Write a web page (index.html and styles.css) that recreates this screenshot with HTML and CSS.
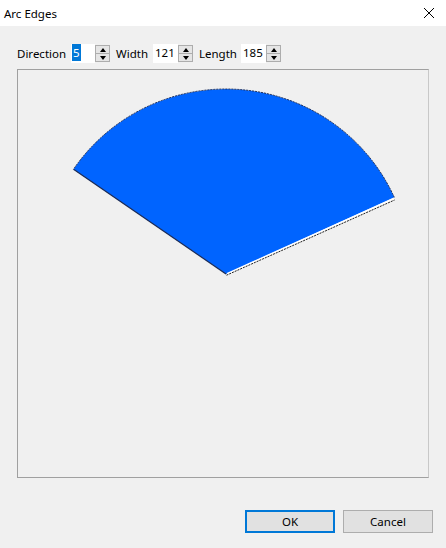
FILE: index.html
```html
<!DOCTYPE html>
<html lang="en">

<head>
    <meta charset="UTF-8">
    <meta name="viewport" content="width=device-width, initial-scale=1.0">
    <title>Arc Edges</title>
    <link rel="stylesheet" href="styles.css">
</head>

<body>
    <div class="window">
        <div class="titlebar">
            <span class="title">Arc Edges</span>
            <svg class="close" width="12" height="12" viewBox="0 0 12 12">
                <path d="M1 1 L11 11 M11 1 L1 11" stroke="#000" stroke-width="1" fill="none"/>
            </svg>
        </div>

        <div class="controls">
            <span class="label l-dir">Direction</span>
            <div class="field f-dir"><span class="sel">5</span></div>
            <div class="spin">
                <div class="half"><span class="up"></span></div>
                <div class="half"><span class="down"></span></div>
            </div>
            <span class="label l-width">Width</span>
            <div class="field f-width">121</div>
            <div class="spin">
                <div class="half"><span class="up"></span></div>
                <div class="half"><span class="down"></span></div>
            </div>
            <span class="label l-len">Length</span>
            <div class="field f-len">185</div>
            <div class="spin">
                <div class="half"><span class="up"></span></div>
                <div class="half"><span class="down"></span></div>
            </div>
        </div>

        <div class="canvas">
            <!-- viewBox in window coordinates so the numbers read like the screen -->
            <svg width="410" height="407" viewBox="18 70 410 407">
                <path d="M226 274 L394.3 197.3 A185 185 0 0 0 73.5 169.2 Z" fill="#0064ff"/>
                <path d="M394.3 197.3 A185 185 0 0 0 73.5 169.2" fill="none" stroke="#1a2a55" stroke-width="1" stroke-dasharray="2 1"/>
                <path d="M73.5 169.2 L226 274" fill="none" stroke="#1a2a55" stroke-width="1.2"/>
                <path d="M227 273.6 L393.6 198.8" fill="none" stroke="#ffffff" stroke-width="1.5"/>
                <path d="M226.5 275.2 L394.6 200" fill="none" stroke="#222" stroke-width="1" stroke-dasharray="2 1"/>
            </svg>
        </div>

        <div class="buttons">
            <button class="btn default">OK</button>
            <button class="btn">Cancel</button>
        </div>
    </div>
</body>

</html>
```

FILE: styles.css
```css
html,
body {
    margin: 0;
    height: 100%;
    overflow: hidden;
}

body {
    background: #f0f0f0;
    font-family: "Noto Sans", "Liberation Sans", sans-serif;
    font-size: 11px;
    color: #000;
}

.window {
    width: 446px;
    height: 548px;
}

.titlebar {
    height: 26px;
    background: #fff;
    display: flex;
    align-items: center;
    justify-content: space-between;
    padding: 0 11px 0 4px;
    font-size: 11.5px;
}

.close {
    display: block;
}

/* spinner row */

.controls {
    display: flex;
    align-items: center;
    height: 19px;
    margin-top: 18px;
    padding-left: 17px;
}

.label {
    line-height: 19px;
    font-size: 11.5px;
}

.l-dir {
    width: 54px;
}

.l-width {
    width: 37px;
}

.l-len {
    width: 42px;
}

.field {
    height: 19px;
    line-height: 18px;
    background: #fff;
    padding-left: 1px;
    box-sizing: border-box;
    font-size: 11.5px;
}

.f-dir {
    width: 24px;
}

.f-width {
    width: 25px;
    padding-left: 2px;
}

.f-len {
    width: 25px;
    padding-left: 2px;
}

.sel {
    display: inline-block;
    background: #0078d7;
    color: #fff;
    padding: 0 1px;
    line-height: 17px;
}

.spin {
    width: 15px;
    height: 17px;
    margin: 0 6px 0 0;
    display: flex;
    flex-direction: column;
    border: 1px solid #adadad;
    box-sizing: border-box;
    background: #e5e5e5;
}

.half {
    flex: 1;
    display: flex;
    align-items: center;
    justify-content: center;
}

.half + .half {
    border-top: 1px solid #adadad;
}

.up {
    border-left: 3.5px solid transparent;
    border-right: 3.5px solid transparent;
    border-bottom: 4px solid #000;
}

.down {
    border-left: 3.5px solid transparent;
    border-right: 3.5px solid transparent;
    border-top: 4px solid #000;
}

/* drawing area */

.canvas {
    margin: 6px 0 0 17px;
    width: 412px;
    height: 409px;
    border: 1px solid #a0a0a0;
    border-right-color: #c8c8c8;
    box-sizing: border-box;
}

.canvas svg {
    display: block;
}

.buttons {
    display: flex;
    justify-content: flex-end;
    gap: 8px;
    margin-top: 32px;
    padding-right: 13px;
}

.btn {
    width: 90px;
    height: 23px;
    background: #e1e1e1;
    border: 1px solid #adadad;
    font-family: "Noto Sans", "Liberation Sans", sans-serif;
    font-size: 11.5px;
    color: #000;
    padding: 0;
    box-sizing: border-box;
}

.btn.default {
    border: 2px solid #0078d7;
}
```
